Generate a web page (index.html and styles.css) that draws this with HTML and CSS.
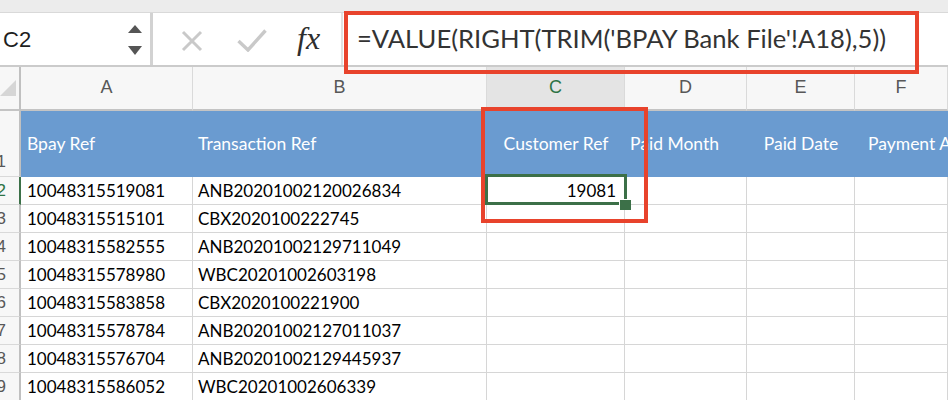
FILE: index.html
```html
<!DOCTYPE html>
<html>
<head>
<meta charset="utf-8">
<link rel="stylesheet" href="styles.css">
</head>
<body>
<div class="topstrip"></div>
<div class="fbar">
  <div class="namebox">
    <span class="ref">C2</span>
    <svg class="spin" width="14" height="30" viewBox="0 0 14 30">
      <polygon points="0,8 7,0 14,8" fill="#555"/>
      <polygon points="0,21 14,21 7,30" fill="#555"/>
    </svg>
  </div>
  <div class="tools">
    <svg class="ic-x" width="22" height="22" viewBox="0 0 22 22">
      <path d="M2 2 L20 20 M20 2 L2 20" stroke="#c9c9c9" stroke-width="3" fill="none"/>
    </svg>
    <svg class="ic-ok" width="30" height="23" viewBox="0 0 30 23">
      <path d="M1.5 12 L11 21 L28.5 1.5" stroke="#c9c9c9" stroke-width="3.4" fill="none"/>
    </svg>
    <span class="fx">fx</span>
  </div>
  <div class="formula">=VALUE(RIGHT(TRIM('BPAY Bank File'!A18),5))</div>
</div>

<div class="sheet">
  <div class="ch corner"><svg width="16" height="16" viewBox="0 0 16 16"><polygon points="0,16 16,16 16,0" fill="#d6d6d6"/></svg></div>
  <div class="ch">A</div>
  <div class="ch">B</div>
  <div class="ch ch-sel">C</div>
  <div class="ch">D</div>
  <div class="ch">E</div>
  <div class="ch">F</div>

  <div class="rh rh-top">1</div>
  <div class="hc pad6">Bpay Ref</div>
  <div class="hc pad5">Transaction Ref</div>
  <div class="hc center">Customer Ref</div>
  <div class="hc pad5">Paid Month</div>
  <div class="hc center">Paid Date</div>
  <div class="hc pad13">Payment Amount</div>

  <div class="rh rh-sel">2</div>
  <div class="c pad6">10048315519081</div>
  <div class="c pad5">ANB20201002120026834</div>
  <div class="c right">19081</div>
  <div class="c"></div><div class="c"></div><div class="c"></div>

  <div class="rh">3</div>
  <div class="c pad6">10048315515101</div>
  <div class="c pad5">CBX2020100222745</div>
  <div class="c"></div><div class="c"></div><div class="c"></div><div class="c"></div>

  <div class="rh">4</div>
  <div class="c pad6">10048315582555</div>
  <div class="c pad5">ANB20201002129711049</div>
  <div class="c"></div><div class="c"></div><div class="c"></div><div class="c"></div>

  <div class="rh">5</div>
  <div class="c pad6">10048315578980</div>
  <div class="c pad5">WBC20201002603198</div>
  <div class="c"></div><div class="c"></div><div class="c"></div><div class="c"></div>

  <div class="rh">6</div>
  <div class="c pad6">10048315583858</div>
  <div class="c pad5">CBX2020100221900</div>
  <div class="c"></div><div class="c"></div><div class="c"></div><div class="c"></div>

  <div class="rh">7</div>
  <div class="c pad6">10048315578784</div>
  <div class="c pad5">ANB20201002127011037</div>
  <div class="c"></div><div class="c"></div><div class="c"></div><div class="c"></div>

  <div class="rh">8</div>
  <div class="c pad6">10048315576704</div>
  <div class="c pad5">ANB20201002129445937</div>
  <div class="c"></div><div class="c"></div><div class="c"></div><div class="c"></div>

  <div class="rh">9</div>
  <div class="c pad6">10048315586052</div>
  <div class="c pad5">WBC20201002606339</div>
  <div class="c"></div><div class="c"></div><div class="c"></div><div class="c"></div>
</div>

<div class="sel"></div>
<div class="handle"></div>
<div class="mark mark-formula"></div>
<div class="mark mark-cell"></div>
</body>
</html>
```

FILE: styles.css
```css
* { box-sizing: border-box; }

body {
  margin: 0;
  width: 948px;
  height: 400px;
  overflow: hidden;
  position: relative;
  background: #ffffff;
  font-family: Lato, "Liberation Sans", sans-serif;
}

.topstrip {
  height: 13px;
  background: #ececec;
  border-bottom: 1px solid #d9d9d9;
}

.fbar {
  display: flex;
  height: 54px;
  background: #ffffff;
  border-bottom: 2px solid #cbcbcb;
}

.namebox {
  width: 153px;
  display: flex;
  align-items: center;
  justify-content: space-between;
  padding: 0 8px 0 3px;
  border-right: 3px solid #d2d2d2;
}

.ref {
  font-family: "Liberation Sans", Arial, sans-serif;
  font-size: 22px;
  color: #1f1f1f;
  margin-top: 1px;
}

.spin { display: block; margin-top: 2px; }

.tools {
  width: 190px;
  display: flex;
  align-items: center;
  border-right: 2px solid #e2e2e2;
}

.ic-x { display: block; margin-left: 28px; margin-top: 4px; }
.ic-ok { display: block; margin-left: 34px; margin-top: 3px; }

.fx {
  font-family: "Liberation Serif", "DejaVu Serif", serif;
  font-style: italic;
  font-size: 32px;
  color: #2e2e2e;
  margin-left: 30px;
  margin-top: -2px;
}

.formula {
  flex: 1;
  display: flex;
  align-items: center;
  padding-left: 14px;
  font-size: 25.6px;
  color: #333333;
  white-space: nowrap;
  padding-bottom: 2px;
}

.sheet {
  display: grid;
  grid-template-columns: 21px 172px 294px 138px 122px 108px 93px;
  grid-template-rows: 44px 66px repeat(8, 28px);
}

.ch {
  display: flex;
  align-items: center;
  justify-content: center;
  background: #f7f7f7;
  border-right: 1px solid #dadada;
  border-bottom: 2px solid #c4c4c4;
  font-family: "Liberation Sans", Arial, sans-serif;
  font-size: 18px;
  color: #585858;
  padding-bottom: 2px;
}

.corner {
  align-items: flex-start;
  justify-content: flex-start;
  border-right: 2px solid #c0c0c0;
  padding: 13px 0 0 0;
}

.corner svg { display: block; }

.ch-sel {
  background: #e4e4e4;
  color: #2d7344;
  border-bottom-color: #3c7048;
}

.rh {
  display: flex;
  align-items: center;
  justify-content: flex-end;
  overflow: hidden;
  white-space: nowrap;
  padding-right: 13px;
  background: #f7f7f7;
  border-right: 2px solid #c0c0c0;
  border-bottom: 1px solid #d9d9d9;
  font-family: "Liberation Sans", Arial, sans-serif;
  font-size: 17px;
  color: #585858;
}

.rh-top {
  align-items: flex-end;
  padding-bottom: 4px;
}

.rh-sel {
  color: #2d7344;
  border-right-color: #3c7048;
}

.hc {
  display: flex;
  align-items: center;
  background: #6a9bd0;
  color: #ffffff;
  font-size: 17.5px;
  white-space: nowrap;
  overflow: visible;
  padding-bottom: 1px;
}

.hc.pad13 { overflow: hidden; }

.c {
  display: flex;
  align-items: center;
  border-right: 1px solid #d6d6d6;
  border-bottom: 1px solid #d6d6d6;
  font-size: 17px;
  color: #000000;
  white-space: nowrap;
  overflow: hidden;
}

.pad6 { padding-left: 6px; }
.pad5 { padding-left: 5px; }
.pad13 { padding-left: 13px; }
.center { justify-content: center; }
.right { justify-content: flex-end; padding-right: 8px; }

.sel {
  position: absolute;
  left: 485px;
  top: 174px;
  width: 142px;
  height: 31px;
  border: 3px solid #3c7048;
}

.handle {
  position: absolute;
  left: 619px;
  top: 199px;
  width: 12px;
  height: 11px;
  background: #3c7048;
  border: 1px solid #ffffff;
  border-right: none;
  border-bottom: none;
}

.mark {
  position: absolute;
  border: 4px solid #e8432c;
}

.mark-formula {
  left: 344px;
  top: 11px;
  width: 575px;
  height: 63px;
}

.mark-cell {
  left: 481px;
  top: 107px;
  width: 167px;
  height: 116px;
}
```
